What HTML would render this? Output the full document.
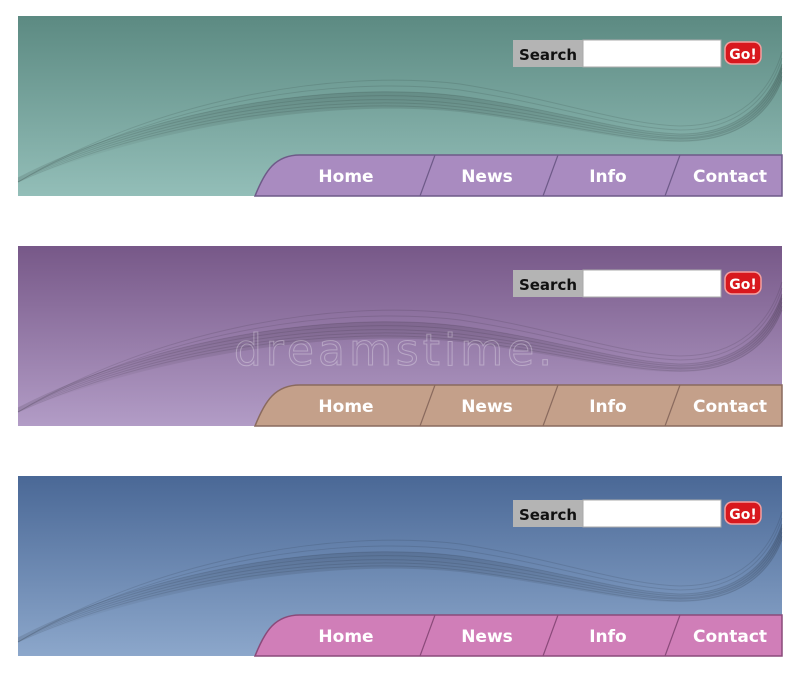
<!DOCTYPE html>
<html><head><style>
html,body{margin:0;padding:0;background:#fff;}
svg{display:block}
text{font-family:"DejaVu Sans","Liberation Sans",sans-serif;font-weight:bold;}
</style></head><body>
<svg width="800" height="674" viewBox="0 0 800 674" xmlns="http://www.w3.org/2000/svg">
<defs>
<linearGradient id="g1" x1="0" y1="0" x2="0" y2="1"><stop offset="0" stop-color="#5c8a82"/><stop offset="1" stop-color="#93beb8"/></linearGradient>
<linearGradient id="g2" x1="0" y1="0" x2="0" y2="1"><stop offset="0" stop-color="#775888"/><stop offset="1" stop-color="#b29cc6"/></linearGradient>
<linearGradient id="g3" x1="0" y1="0" x2="0" y2="1"><stop offset="0" stop-color="#4a6896"/><stop offset="1" stop-color="#8ca7cb"/></linearGradient>
<linearGradient id="bandg" x1="0" y1="0" x2="0" y2="1"><stop offset="0" stop-color="#000" stop-opacity="0.16"/><stop offset="1" stop-color="#000" stop-opacity="0"/></linearGradient>
<g id="waves">
<path d="M18,178 C150,110 330,80 460,96 C560,110 620,132 680,134 C740,134 770,100 782,64 L782,80 C770,112 740,142 680,142 C620,142 560,124 460,112 C330,98 150,128 18,182 Z" fill="url(#bandg)"/>
<g fill="none" stroke="#000" stroke-opacity="0.1" stroke-width="1">
<path d="M18,178 C150,110 330,80 460,96 C560,110 620,132 680,134 C740,134 770,100 782,64"/>
<path d="M18,179 C150,113 330,84 460,100 C560,113 620,134 680,136 C740,136 770,103 782,68"/>
<path d="M18,180 C150,116 330,88 460,104 C560,116 620,136 680,138 C740,138 770,106 782,72"/>
<path d="M18,181 C150,119 330,92 460,107 C560,119 620,138 680,139 C740,139 770,109 782,76"/>
<path d="M18,182 C150,122 330,95 460,110 C560,122 620,140 680,141 C740,141 770,112 782,80"/>
<path d="M18,182 C150,106 330,74 460,90 C560,105 620,128 680,130 C740,130 770,96 782,58"/>
<path d="M18,182 C150,102 330,68 460,84 C560,100 620,124 680,126 C740,126 770,92 782,52"/>
</g>
</g>
<g id="srch">
<rect x="513" y="40" width="71" height="27" fill="#b4b4b4"/>
<text x="548" y="60" font-size="15" text-anchor="middle" fill="#111">Search</text>
<rect x="583" y="40" width="138" height="27" fill="#fff" stroke="#aaa"/>
<rect x="725" y="42" width="36" height="22" rx="7" fill="#d8181e" stroke="#f4a0a0" stroke-width="1.5"/>
<text x="743" y="59" font-size="14" text-anchor="middle" fill="#fff">Go!</text>
</g>
<g id="navtxt" font-size="17" fill="#fff" text-anchor="middle">
<text x="346" y="182">Home</text><text x="487" y="182">News</text><text x="608" y="182">Info</text><text x="730" y="182">Contact</text>
</g>
<g id="div" stroke-width="1.2">
<line x1="435" y1="155" x2="420" y2="196"/><line x1="558" y1="155" x2="543" y2="196"/><line x1="680" y1="155" x2="665" y2="196"/>
</g>
</defs>

<rect x="18" y="16" width="764" height="180" fill="url(#g1)"/>
<use href="#waves"/>
<path d="M255,196 C265,171 275,155 300,155 L782,155 L782,196 Z" fill="#a98bc0" stroke="#6e5a88" stroke-width="1.5"/>
<use href="#div" stroke="#6e5a88"/>
<use href="#navtxt"/>
<use href="#srch"/>

<g transform="translate(0,230)">
<rect x="18" y="16" width="764" height="180" fill="url(#g2)"/>
<use href="#waves"/>
<text x="395" y="135" font-size="44" text-anchor="middle" fill="none" stroke="#fff" stroke-opacity="0.3" style="font-family:'DejaVu Sans',sans-serif;font-weight:normal" letter-spacing="4">dreamstime.</text>
<path d="M255,196 C265,171 275,155 300,155 L782,155 L782,196 Z" fill="#c4a08a" stroke="#8a6a5e" stroke-width="1.5"/>
<use href="#div" stroke="#8a6a5e"/>
<use href="#navtxt"/>
<use href="#srch"/>
</g>

<g transform="translate(0,460)">
<rect x="18" y="16" width="764" height="180" fill="url(#g3)"/>
<use href="#waves"/>
<path d="M255,196 C265,171 275,155 300,155 L782,155 L782,196 Z" fill="#d07eb8" stroke="#8a4a7a" stroke-width="1.5"/>
<use href="#div" stroke="#8a4a7a"/>
<use href="#navtxt"/>
<use href="#srch"/>
</g>
</svg>
</body></html>
